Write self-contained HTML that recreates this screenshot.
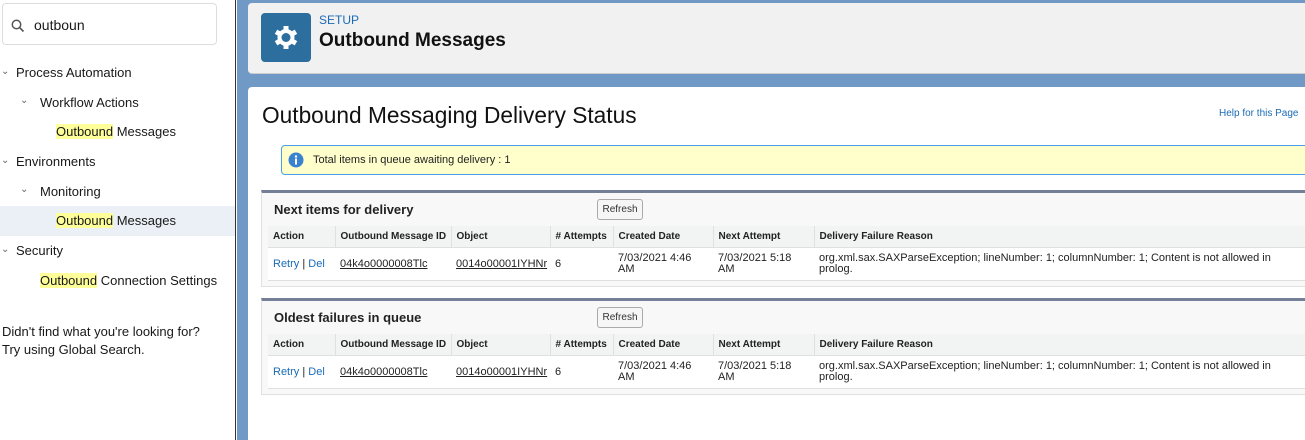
<!DOCTYPE html>
<html><head><meta charset="utf-8"><style>
*{margin:0;padding:0;box-sizing:border-box}
body{width:1305px;height:440px;overflow:hidden;font-family:"Liberation Sans",Arial,sans-serif;background:#fff;position:relative}
.abs{position:absolute}
.side{left:0;top:0;width:236px;height:440px;background:#fff;border-right:1px solid #333}
.search{left:2px;top:3px;width:215px;height:42px;border:1px solid #ddd;border-radius:4px}
.nav{font-size:13px;color:#181818;white-space:nowrap}
.hl{background:#ffff99}
.main{left:237px;top:0;width:1068px;height:440px;background:#7199c6}
.hdr{left:248px;top:3px;width:1057px;height:71px;background:#f1f1f1;border-radius:4px 0 0 4px;border-bottom:1px solid #ccc}
.content{left:248px;top:87px;width:1057px;height:353px;background:#fff;border-radius:4px 0 0 0}
.sec{left:261px;width:1044px;border-top:3px solid #747e96;background:#f8f8f8;border-left:1px solid #e0e0e0;border-bottom:1px solid #e0e0e0}
.sec h3{position:absolute;left:12px;top:9px;font-size:13px;font-weight:bold;color:#222}
.btn{position:absolute;left:335px;top:6px;width:46px;height:21px;border:1px solid #aaa;border-radius:3px;background:#f6f6f6;font-size:10px;color:#333;text-align:center;line-height:19px}
table{position:absolute;left:6px;top:33px;width:1038px;border-collapse:collapse;font-size:11px;color:#222;background:#fff;table-layout:fixed}
th{background:#f2f3f3;text-align:left;font-size:10px;font-weight:bold;height:21px;padding:0 5px;border-left:1px solid #e0e0e0;border-bottom:1px solid #e0e0e0;white-space:nowrap;overflow:hidden}
td{height:33px;padding:0 5px;vertical-align:top;padding-top:5px;line-height:11px;border-bottom:1px solid #e0e0e0}
th:first-child{border-left:none}
a{color:#1a6bb5;text-decoration:none}
u{color:#222}
</style></head><body>
<div class="abs side">
 <div class="abs search">
  <svg class="abs" style="left:8px;top:15px" width="14" height="14" viewBox="0 0 14 14"><circle cx="5.5" cy="5.5" r="4.2" stroke="#555" stroke-width="1.5" fill="none"/><line x1="8.7" y1="8.7" x2="12.5" y2="12.5" stroke="#555" stroke-width="1.6"/></svg>
  <span class="abs nav" style="left:31px;top:13px;font-size:14px">outboun</span>
 </div>
 <span class="abs nav" style="left:1px;top:66px;color:#666;font-size:10px">⌄</span>
 <span class="abs nav" style="left:16px;top:65px">Process Automation</span>
 <span class="abs nav" style="left:20px;top:95px;color:#666;font-size:10px">⌄</span>
 <span class="abs nav" style="left:40px;top:95px">Workflow Actions</span>
 <span class="abs nav" style="left:56px;top:124px"><span class="hl">Outbound</span> Messages</span>
 <span class="abs nav" style="left:1px;top:155px;color:#666;font-size:10px">⌄</span>
 <span class="abs nav" style="left:16px;top:154px">Environments</span>
 <span class="abs nav" style="left:20px;top:184px;color:#666;font-size:10px">⌄</span>
 <span class="abs nav" style="left:40px;top:184px">Monitoring</span>
 <div class="abs" style="left:0;top:206px;width:235px;height:30px;background:#eaf0f5"></div>
 <span class="abs nav" style="left:56px;top:213px"><span class="hl">Outbound</span> Messages</span>
 <span class="abs nav" style="left:1px;top:244px;color:#666;font-size:10px">⌄</span>
 <span class="abs nav" style="left:16px;top:243px">Security</span>
 <span class="abs nav" style="left:40px;top:273px"><span class="hl">Outbound</span> Connection Settings</span>
 <span class="abs nav" style="left:2px;top:324px">Didn't find what you're looking for?</span>
 <span class="abs nav" style="left:2px;top:342px">Try using Global Search.</span>
</div>
<div class="abs main"></div>
<div class="abs hdr">
 <div class="abs" style="left:13px;top:10px;width:50px;height:49px;background:#2c6e9e;border-radius:4px">
  <svg width="50" height="49" viewBox="0 0 50 49"><g transform="translate(25,24.5)" fill="#fff"><circle r="8.5"/><rect x="-2.5" y="-11.5" width="5" height="23"/><rect x="-2.5" y="-11.5" width="5" height="23" transform="rotate(60)"/><rect x="-2.5" y="-11.5" width="5" height="23" transform="rotate(120)"/><circle r="4.5" fill="#2c6e9e"/></g></svg>
 </div>
 <span class="abs" style="left:71px;top:10px;font-size:12px;color:#1a6bb5">SETUP</span>
 <span class="abs" style="left:71px;top:27px;font-size:19px;font-weight:bold;color:#111">Outbound Messages</span>
</div>
<div class="abs content"></div>
<span class="abs" style="left:262px;top:102px;font-size:22.7px;color:#111">Outbound Messaging Delivery Status</span>
<a class="abs" style="left:1219px;top:108px;font-size:10px">Help for this Page</a>
<div class="abs" style="left:281px;top:145px;width:1030px;height:30px;background:#ffffcc;border:1px solid #4a9fe8;border-radius:4px">
 <svg class="abs" style="left:6px;top:6px" width="16" height="16"><circle cx="8" cy="8" r="7.5" fill="#3a82d0"/><circle cx="8" cy="4.5" r="1.2" fill="#fff"/><rect x="7" y="6.5" width="2" height="6" fill="#fff"/></svg>
 <span class="abs" style="left:31px;top:8px;font-size:11px;color:#222">Total items in queue awaiting delivery : 1</span>
</div>
<div class="abs sec" style="top:190px;height:97px"><h3>Next items for delivery</h3><div class="btn">Refresh</div>
<table><tr><th style="width:67px">Action</th><th style="width:116px">Outbound Message ID</th><th style="width:99px">Object</th><th style="width:63px"># Attempts</th><th style="width:100px">Created Date</th><th style="width:101px">Next Attempt</th><th>Delivery Failure Reason</th></tr>
<tr><td style="padding-top:11px"><a>Retry</a> | <a>Del</a></td><td style="padding-top:11px"><u>04k4o0000008Tlc</u></td><td style="padding-top:11px"><u>0014o00001IYHNr</u></td><td style="padding-top:11px">6</td><td>7/03/2021 4:46 AM</td><td>7/03/2021 5:18 AM</td><td>org.xml.sax.SAXParseException; lineNumber: 1; columnNumber: 1; Content is not allowed in prolog.</td></tr></table></div>
<div class="abs sec" style="top:298px;height:97px"><h3>Oldest failures in queue</h3><div class="btn">Refresh</div>
<table><tr><th style="width:67px">Action</th><th style="width:116px">Outbound Message ID</th><th style="width:99px">Object</th><th style="width:63px"># Attempts</th><th style="width:100px">Created Date</th><th style="width:101px">Next Attempt</th><th>Delivery Failure Reason</th></tr>
<tr><td style="padding-top:11px"><a>Retry</a> | <a>Del</a></td><td style="padding-top:11px"><u>04k4o0000008Tlc</u></td><td style="padding-top:11px"><u>0014o00001IYHNr</u></td><td style="padding-top:11px">6</td><td>7/03/2021 4:46 AM</td><td>7/03/2021 5:18 AM</td><td>org.xml.sax.SAXParseException; lineNumber: 1; columnNumber: 1; Content is not allowed in prolog.</td></tr></table></div>
</body></html>
